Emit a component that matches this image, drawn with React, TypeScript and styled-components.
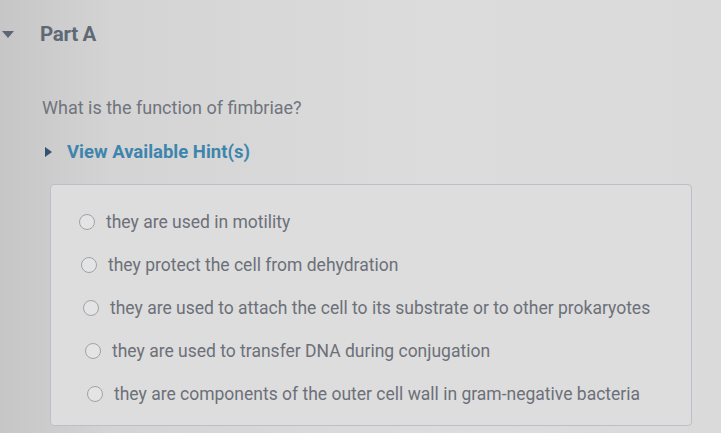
import styled, { createGlobalStyle } from 'styled-components'

const GlobalStyle = createGlobalStyle`
  html, body {
    margin: 0;
    padding: 0;
    background: #d6d6d6;
  }
`

const Page = styled.div`
  width: 721px;
  height: 433px;
  overflow: hidden;
  box-sizing: border-box;
  padding-top: 22px;
  font-family: Roboto, "Liberation Sans", sans-serif;
  background: linear-gradient(90deg, #c6c6c6 0%, #d4d4d4 16%, #dcdcdc 60%, #dadada 100%);
`

const PartHeader = styled.div`
  display: flex;
  align-items: center;
  height: 24px;
  padding-left: 2px;
`

const DownCaret = styled.span`
  width: 0;
  height: 0;
  border-left: 6px solid transparent;
  border-right: 6px solid transparent;
  border-top: 7px solid #5d6672;
  margin-right: 26px;
`

const PartTitle = styled.h2`
  margin: 0;
  font-size: 20.5px;
  font-weight: 700;
  color: #5f6976;
  letter-spacing: -0.3px;
`

const Body = styled.div`
  padding-left: 42px;
`

const Question = styled.p`
  margin: 51px 0 0;
  font-size: 18px;
  line-height: 22px;
  color: #70747d;
`

const HintToggle = styled.div`
  display: flex;
  align-items: center;
  margin-top: 22px;
  padding-left: 3px;
  height: 22px;
`

const RightCaret = styled.span`
  width: 0;
  height: 0;
  border-top: 5px solid transparent;
  border-bottom: 5px solid transparent;
  border-left: 7px solid #34536f;
  margin-right: 15px;
`

const HintLink = styled.span`
  font-size: 18.5px;
  font-weight: 700;
  color: #3e85ad;
`

const AnswerBox = styled.div`
  margin: 21px 0 0 8px;
  width: 642px;
  height: 242px;
  box-sizing: border-box;
  border: 1px solid #bcbfc7;
  border-radius: 4px;
  background: #dddddd;
  display: flex;
  flex-direction: column;
  padding: 15px 0 0 28px;
`

const Choice = styled.label<{ $shift: number }>`
  display: flex;
  align-items: center;
  height: 43px;
  padding-left: ${p => p.$shift}px;
  font-size: 17.5px;
  color: #6c7079;
  cursor: pointer;
`

const Radio = styled.span`
  width: 14px;
  height: 14px;
  border: 1.5px solid #9ea3aa;
  border-radius: 50%;
  background: #e4e4e4;
  margin-right: 11px;
  flex-shrink: 0;
`

const choices = [
  'they are used in motility',
  'they protect the cell from dehydration',
  'they are used to attach the cell to its substrate or to other prokaryotes',
  'they are used to transfer DNA during conjugation',
  'they are components of the outer cell wall in gram-negative bacteria',
]

export default function App (): JSX.Element {
  return (
    <Page>
      <GlobalStyle />
      <PartHeader>
        <DownCaret />
        <PartTitle>Part A</PartTitle>
      </PartHeader>
      <Body>
        <Question>What is the function of fimbriae?</Question>
        <HintToggle>
          <RightCaret />
          <HintLink>View Available Hint(s)</HintLink>
        </HintToggle>
        <AnswerBox>
          {choices.map((text, i) => (
            <Choice key={text} $shift={i * 2}>
              <Radio />
              {text}
            </Choice>
          ))}
        </AnswerBox>
      </Body>
    </Page>
  )
}
